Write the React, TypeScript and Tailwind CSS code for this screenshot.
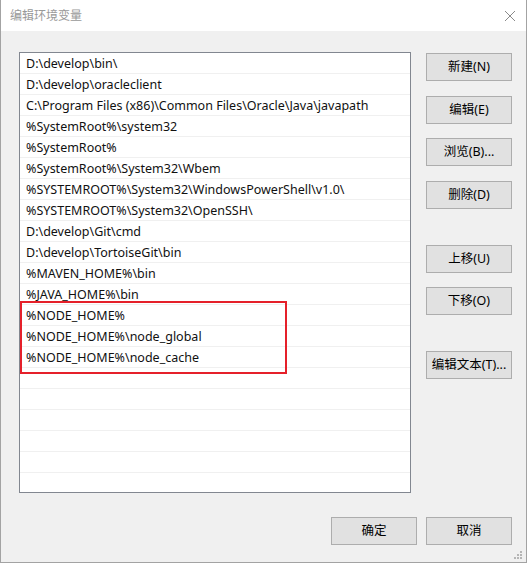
const paths = [
  'D:\\develop\\bin\\',
  'D:\\develop\\oracleclient',
  'C:\\Program Files (x86)\\Common Files\\Oracle\\Java\\javapath',
  '%SystemRoot%\\system32',
  '%SystemRoot%',
  '%SystemRoot%\\System32\\Wbem',
  '%SYSTEMROOT%\\System32\\WindowsPowerShell\\v1.0\\',
  '%SYSTEMROOT%\\System32\\OpenSSH\\',
  'D:\\develop\\Git\\cmd',
  'D:\\develop\\TortoiseGit\\bin',
  '%MAVEN_HOME%\\bin',
  '%JAVA_HOME%\\bin',
  '%NODE_HOME%',
  '%NODE_HOME%\\node_global',
  '%NODE_HOME%\\node_cache',
];

// empty rows keep drawing the grid lines down to the bottom of the box
const rows = [...paths, ...Array(21 - paths.length).fill('')];

const Btn = ({ label, className = '' }: { label: string; className?: string }) => (
  <button className={`w-[86px] h-[28px] bg-[#e1e1e1] border border-[#adadad] text-[12.5px] text-black leading-none pt-[1px] ${className}`}>
    {label}
  </button>
);

export default function App() {
  return (
    <div
      className="relative w-[527px] h-[563px] flex flex-col bg-[#f0f0f0] border-l border-r border-b border-[#a3a3a3] overflow-hidden"
      style={{ fontFamily: '"Noto Sans", "Noto Sans CJK SC", sans-serif' }}
    >
      {/* title bar */}
      <div className="h-[31px] shrink-0 bg-white flex items-center justify-between pl-[9px] pr-[9px]">
        <span className="text-[12px] text-[#999999]">编辑环境变量</span>
        <svg width="12" height="12" viewBox="0 0 12 12" className="mr-[1px]">
          <path d="M1 1 L11 11 M11 1 L1 11" stroke="#8a8a8a" strokeWidth="1" />
        </svg>
      </div>

      <div className="flex pl-[18px] pt-[21px]">
        {/* path list */}
        <div className="relative w-[392px] h-[441px] bg-white border border-[#828790] overflow-hidden">
          {rows.map((p, i) => (
            <div key={i} className="h-[21px] border-b border-[#f0f0f0] pl-[6px] pt-[2px] flex items-center text-[12.5px] text-[#111] whitespace-nowrap">
              {p}
            </div>
          ))}
          <div className="absolute left-0 top-[248px] w-[267px] h-[73px] border-2 border-[#e5202a]" />
        </div>

        {/* action buttons */}
        <div className="ml-[15px] flex flex-col pt-[1px]">
          <Btn label="新建(N)" />
          <Btn label="编辑(E)" className="mt-[15px]" />
          <Btn label="浏览(B)..." className="mt-[14px]" />
          <Btn label="删除(D)" className="mt-[15px]" />
          <Btn label="上移(U)" className="mt-[36px]" />
          <Btn label="下移(O)" className="mt-[14px]" />
          <Btn label="编辑文本(T)..." className="mt-[36px]" />
        </div>
      </div>

      <div className="flex justify-end gap-[9px] pr-[14px] mt-[24px]">
        <Btn label="确定" />
        <Btn label="取消" />
      </div>

      {/* size grip */}
      <svg width="9" height="9" viewBox="0 0 9 9" className="absolute right-[3px] bottom-[2px]">
        <rect x="6" y="0" width="2" height="2" fill="#b5b5b5" />
        <rect x="3" y="3" width="2" height="2" fill="#b5b5b5" />
        <rect x="6" y="3" width="2" height="2" fill="#b5b5b5" />
        <rect x="0" y="6" width="2" height="2" fill="#b5b5b5" />
        <rect x="3" y="6" width="2" height="2" fill="#b5b5b5" />
        <rect x="6" y="6" width="2" height="2" fill="#b5b5b5" />
      </svg>
    </div>
  );
}
